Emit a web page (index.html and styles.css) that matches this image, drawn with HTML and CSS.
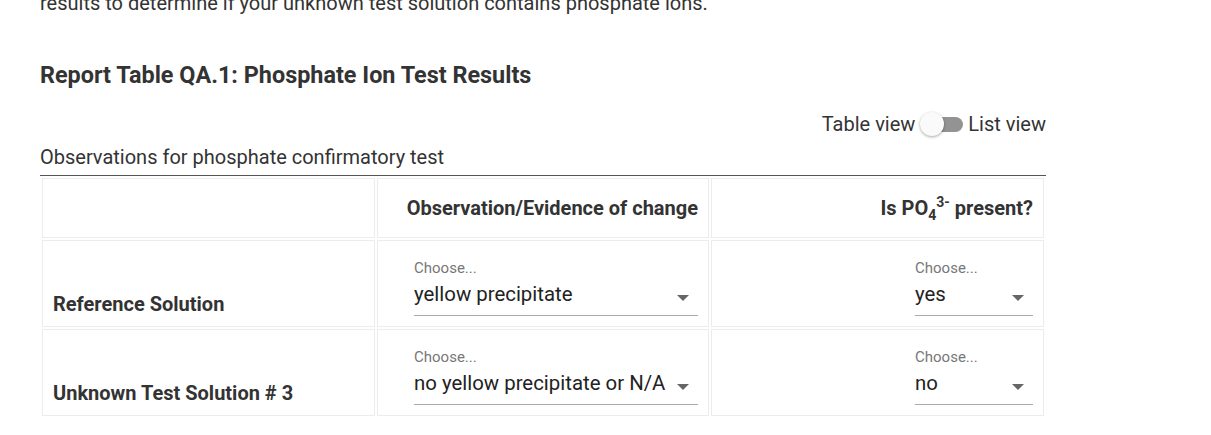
FILE: index.html
```html
<!DOCTYPE html>
<html>
<head>
<meta charset="utf-8">
<link rel="stylesheet" href="styles.css">
</head>
<body>
<div class="page">
  <p class="intro">results to determine if your unknown test solution contains phosphate ions.</p>
  <h2 class="title">Report Table QA.1: Phosphate Ion Test Results</h2>
  <div class="toggle-row">
    <span>Table view</span>
    <span class="switch"><span class="track"></span><span class="thumb"></span></span>
    <span>List view</span>
  </div>
  <div class="caption">Observations for phosphate confirmatory test</div>
  <table class="report">
    <thead>
      <tr>
        <th class="c1"></th>
        <th class="c2">Observation/Evidence of change</th>
        <th class="c3">Is PO<sub>4</sub><sup>3-</sup> present?</th>
      </tr>
    </thead>
    <tbody>
      <tr>
        <td class="label">Reference Solution</td>
        <td class="sel-cell">
          <div class="select wide">
            <div class="hint">Choose...</div>
            <div class="value"><span>yellow precipitate</span><span class="arrow"></span></div>
          </div>
        </td>
        <td class="sel-cell">
          <div class="select narrow">
            <div class="hint">Choose...</div>
            <div class="value"><span>yes</span><span class="arrow"></span></div>
          </div>
        </td>
      </tr>
      <tr>
        <td class="label">Unknown Test Solution # 3</td>
        <td class="sel-cell">
          <div class="select wide">
            <div class="hint">Choose...</div>
            <div class="value"><span>no yellow precipitate or N/A</span><span class="arrow"></span></div>
          </div>
        </td>
        <td class="sel-cell">
          <div class="select narrow">
            <div class="hint">Choose...</div>
            <div class="value"><span>no</span><span class="arrow"></span></div>
          </div>
        </td>
      </tr>
    </tbody>
  </table>
</div>
</body>
</html>
```

FILE: styles.css
```css
html, body {
  margin: 0;
  padding: 0;
  background: #fff;
}
body {
  font-family: Roboto, "Liberation Sans", sans-serif;
  color: #333;
}
.page {
  width: 1006px;
  margin-left: 40px;
  margin-top: -11px;
}
.intro {
  margin: 0;
  font-size: 20px;
  line-height: 28px;
}
.title {
  margin: 43px 0 0;
  font-size: 23.4px;
  font-weight: 700;
  line-height: 30px;
}
.toggle-row {
  display: flex;
  justify-content: flex-end;
  align-items: center;
  gap: 5px;
  margin-top: 22px;
  font-size: 20px;
  line-height: 24px;
}
.switch {
  position: relative;
  width: 43px;
  height: 24px;
}
.track {
  position: absolute;
  left: 10px;
  top: 5px;
  width: 33px;
  height: 15px;
  border-radius: 8px;
  background: #939393;
}
.thumb {
  position: absolute;
  left: 0;
  top: 0;
  width: 24px;
  height: 24px;
  border-radius: 50%;
  background: #fafafa;
  box-shadow: 0 1px 3px rgba(0,0,0,0.35);
}
.caption {
  font-size: 20px;
  line-height: 24px;
  margin-top: 9px;
  padding-bottom: 6px;
  border-bottom: 1px solid #555;
}
.report {
  width: 1006px;
  border-collapse: separate;
  border-spacing: 2px;
  font-size: 20px;
}
.report th, .report td {
  border: 1px solid #ececec;
}
.report th {
  height: 58px;
  text-align: right;
  padding: 0 10px;
  font-weight: 700;
  vertical-align: middle;
}
.c1 { width: 311px; }
.c2 { width: 310px; }
.report sub, .report sup {
  font-size: 14px;
  line-height: 0;
}
.report td {
  height: 75px;
  padding: 0 10px 10px;
  vertical-align: bottom;
}
.label {
  font-weight: 700;
  font-size: 20px;
  line-height: 24px;
}
.sel-cell {
  text-align: right;
}
.select {
  display: inline-block;
  text-align: left;
  border-bottom: 1px solid #aaa;
}
.wide { width: 284px; }
.narrow { width: 118px; }
.hint {
  font-size: 15px;
  color: #777;
  line-height: 18px;
  margin-bottom: 5px;
}
.value {
  display: flex;
  justify-content: space-between;
  align-items: center;
  font-size: 20.4px;
  color: #222;
  line-height: 24px;
  padding-bottom: 9px;
}
.arrow {
  width: 0;
  height: 0;
  margin-right: 9px;
  margin-top: 8px;
  border-left: 6px solid transparent;
  border-right: 6px solid transparent;
  border-top: 6px solid #666;
}
```
